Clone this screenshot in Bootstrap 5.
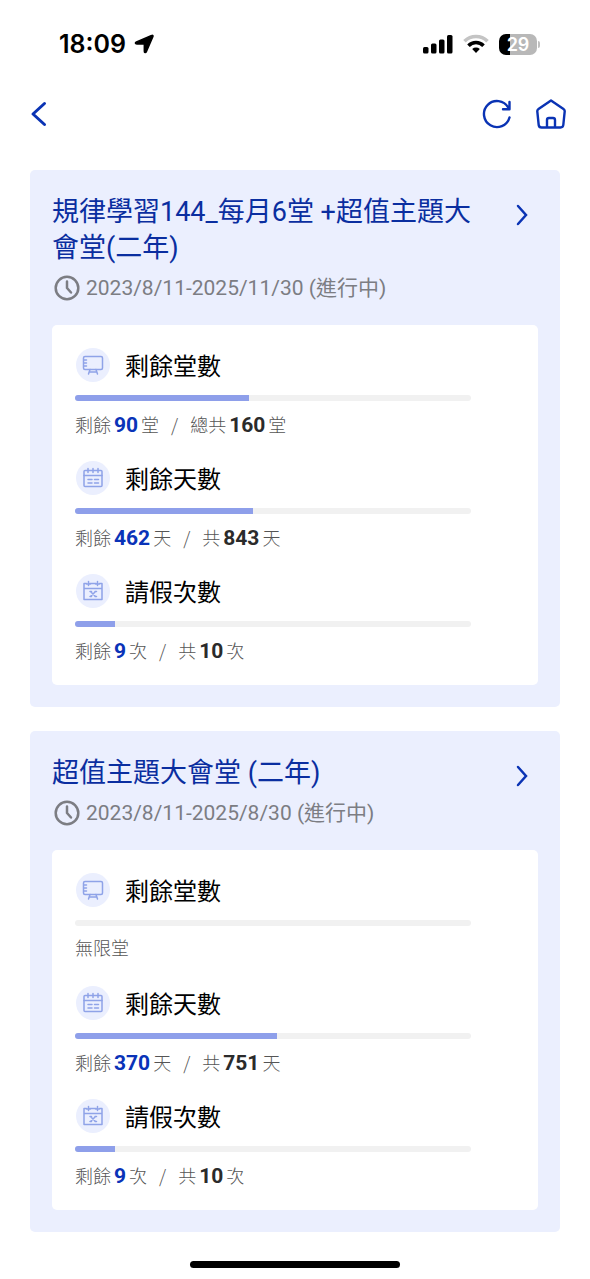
<!DOCTYPE html>
<html lang="zh-Hant">
<head>
<meta charset="utf-8">
<meta name="viewport" content="width=device-width, initial-scale=1">
<title>課程</title>
<link href="https://cdn.jsdelivr.net/npm/bootstrap@5.3.0/dist/css/bootstrap.min.css" rel="stylesheet">
<style>
  body { font-family: Roboto, "Noto Sans CJK TC", sans-serif; background: #fff; color: #000; }
  svg { display: block; flex: none; }
  .status-bar { height: 88px; padding: 0 50px 0 59px; }
  .clock { font: 600 25px/30px Inter, sans-serif; }
  .battery-level { width: 38px; height: 21px; border-radius: 7px; background: linear-gradient(90deg, #000 29%, #b8b8b8 29%); color: #fff; font: 600 18px/21px Inter, sans-serif; }
  .battery-tip { width: 2px; height: 7px; margin-left: 1px; border-radius: 0 2px 2px 0; background: #c0c0c0; }
  .top-nav { height: 52px; padding: 0 24px 0 30px; color: #0a33b4; }
  .course-list { padding: 30px 30px 29px; gap: 24px; }
  .course { background: #ebeffe; border-radius: 5px; padding: 24px 22px 22px; }
  .course-title { font-size: 27px; line-height: 36px; font-weight: 400; color: #0a2ea0; }
  .course-link { padding: 10px 7px 0 36px; }
  .period { margin-top: 7px; margin-bottom: 22px; padding-left: 2px; gap: 6px; font-size: 21px; line-height: 30px; color: #7c7d83; }
  .stats { background: #fff; border-radius: 5px; padding: 22px 23px 20px; gap: 21px; }
  .stat-head { height: 36px; gap: 15px; padding-left: 1px; }
  .stat-icon { width: 34px; height: 34px; background: #ebeffe; color: #8fa3e8; }
  .stat-name { padding-top: 4px; font-size: 24px; line-height: 36px; font-weight: 400; color: #000; }
  .stat-bar { width: 90%; height: 6px; margin: 12px 0 8px; border-radius: 3px; background: #f1f1f1; }
  .stat-bar .progress-bar { background: #8e9fea; }
  .amount { height: 30px; font-size: 18px; line-height: 30px; font-weight: 300; color: #555; }
  .amount b { font-size: 21px; font-weight: 700; color: #2b2b2b; margin: 0 3px; }
  .amount b.left { color: #0a33b8; }
  .slash { margin: 0 12px; font-family: "Noto Sans CJK TC", sans-serif; }
  .home-bar { width: 210px; height: 7px; margin-bottom: 12px; background: #000; }
</style>
</head>
<body>
<svg width="0" height="0" class="position-absolute" aria-hidden="true">
  <defs>
    <g id="i-board" fill="none" stroke="currentColor" stroke-width="1.500" stroke-linejoin="round" stroke-linecap="round">
      <rect x="8.500" y="9.500" width="19" height="13" rx="1.500"/><path d="M9 13h2.500M9 16h2.500M9 19h2.500M15 22.500l-1.500 4.500M21 22.500l1.500 4.500M14.500 25h7"/>
    </g>
    <g id="i-cal" fill="none" stroke="currentColor" stroke-width="1.500" stroke-linejoin="round" stroke-linecap="round">
      <rect x="9" y="10.500" width="18" height="16" rx="1"/><path d="M9 15.500h18M13 8.500v4M18 8.500v4M23 8.500v4M13 19.500h4M19.500 19.500h4M13 23h4M19.500 23h4"/>
    </g>
    <g id="i-leave" fill="none" stroke="currentColor" stroke-width="1.500" stroke-linejoin="round" stroke-linecap="round">
      <path d="M11.500 10.500H9v16h18v-16h-2.500M15 10.500h6M9 15.500h18M13.500 8.500v4M22.500 8.500v4M11.500 11h4M20.500 11h4M15.500 18.500l5 5M20.500 18.500l-5 5M15 18.500h1.500M20 18.500h1.500M15 23.500h1.500M20 23.500h1.500"/>
    </g>
    <g id="i-clock" fill="none" stroke="#7c7d83" stroke-width="2.500" stroke-linecap="round"><circle cx="13" cy="13" r="11.300"/><path d="M13 6.500V13l4 4.500" stroke-linejoin="round"/></g>
    <path id="i-next" d="M2 2l8 9-8 9" fill="none" stroke="#0a33b4" stroke-width="2.500" stroke-linecap="round"/>
  </defs>
</svg>

<header>
  <div class="status-bar d-flex align-items-center justify-content-between">
    <div class="d-flex align-items-center gap-2">
      <span class="clock">18:09</span>
      <svg width="20" height="20" viewBox="0 0 21 21"><path stroke="#000" stroke-width="1.500" stroke-linejoin="round" d="M18.500 1.600C19.700 1 20.300 1.700 19.800 2.900L13 18.500c-.7 1.600-2.200 1.200-2.200-.5v-7.500H3C1.100 10.500.9 9 2.600 8.300z"/></svg>
    </div>
    <div class="d-flex align-items-center">
      <svg width="30" height="20" viewBox="0 0 30 20"><rect y="13" width="5.500" height="6.500" rx="1.500"/><rect x="8" y="9.500" width="5.500" height="10" rx="1.500"/><rect x="16" y="5.500" width="5.500" height="14" rx="1.500"/><rect x="24" y="1" width="5.500" height="18.500" rx="1.500"/></svg>
      <svg class="ms-2 me-2" width="30" height="20" viewBox="0 0 30 20"><g transform="translate(2)" fill="none" stroke-width="3.600"><path d="M1.500 7.200a16.500 16.500 0 0 1 23 0" stroke="#c4c4c4"/><path d="M5.500 11.700a10.500 10.500 0 0 1 15 0" stroke="#000"/><path d="M9.200 15a5.600 5.600 0 0 1 7.600 0L13 19z" fill="#000"/></g></svg>
      <div class="battery-level text-center">29</div><div class="battery-tip"></div>
    </div>
  </div>
  <nav class="top-nav d-flex align-items-center justify-content-between">
    <button type="button" class="btn p-0 border-0" aria-label="返回"><svg width="18" height="26" viewBox="0 0 18 26" fill="none" stroke="#0a33b4" stroke-width="3" stroke-linecap="round" stroke-linejoin="round"><path d="M14.500 2.500L3 13l11.500 10.500"/></svg></button>
    <div class="d-flex align-items-center gap-4">
      <button type="button" class="btn p-0 border-0" aria-label="重新整理"><svg width="30" height="30" viewBox="0 0 30 30" fill="none" stroke="#0a33b4" stroke-width="2.400" stroke-linecap="round" stroke-linejoin="round"><path d="M27.500 18.500A13 13 0 1 1 26.200 8.500M27.500 3v7.300H21"/></svg></button>
      <a href="#" aria-label="首頁"><svg width="30" height="30" viewBox="0 0 30 30" fill="none" stroke="#0a33b4" stroke-width="2.400" stroke-linecap="round" stroke-linejoin="round"><path d="M15 1.500L27.500 10c1 .7 1.300 1.300 1.200 2.400L27.300 26c-.2 1.700-1 2.500-2.800 2.500h-19c-1.800 0-2.600-.8-2.800-2.500L1.300 12.400c-.1-1.100.2-1.700 1.200-2.400zM11 28v-7c0-1.200.7-2 2-2h4c1.300 0 2 .8 2 2v7"/></svg></a>
    </div>
  </nav>
</header>

<main class="course-list d-flex flex-column">
  <article class="course">
    <div class="row g-0">
      <h2 class="course-title col mb-0">規律學習144_每月6堂 +超值主題大會堂(二年)</h2>
      <a href="#" class="course-link col-auto" aria-label="查看課程"><svg width="16" height="22" viewBox="-1 0 16 22"><use href="#i-next"/></svg></a>
    </div>
    <div class="period d-flex align-items-center"><svg width="26" height="26"><use href="#i-clock"/></svg><span>2023/8/11-2025/11/30 (進行中)</span></div>
    <div class="stats d-flex flex-column">
      <section>
        <div class="stat-head d-flex align-items-center"><span class="stat-icon rounded-circle"><svg width="34" height="34" viewBox="1 1 34 34"><use href="#i-board"/></svg></span><h3 class="stat-name mb-0">剩餘堂數</h3></div>
        <div class="progress stat-bar" role="progressbar" aria-label="剩餘堂數" aria-valuenow="44" aria-valuemin="0" aria-valuemax="100"><div class="progress-bar" style="width:44%"></div></div>
        <div class="amount d-flex align-items-baseline">剩餘<b class="left">90</b>堂<span class="slash">/</span>總共<b>160</b>堂</div>
      </section>
      <section>
        <div class="stat-head d-flex align-items-center"><span class="stat-icon rounded-circle"><svg width="34" height="34" viewBox="1 1 34 34"><use href="#i-cal"/></svg></span><h3 class="stat-name mb-0">剩餘天數</h3></div>
        <div class="progress stat-bar" role="progressbar" aria-label="剩餘天數" aria-valuenow="45" aria-valuemin="0" aria-valuemax="100"><div class="progress-bar" style="width:45%"></div></div>
        <div class="amount d-flex align-items-baseline">剩餘<b class="left">462</b>天<span class="slash">/</span>共<b>843</b>天</div>
      </section>
      <section>
        <div class="stat-head d-flex align-items-center"><span class="stat-icon rounded-circle"><svg width="34" height="34" viewBox="1 1 34 34"><use href="#i-leave"/></svg></span><h3 class="stat-name mb-0">請假次數</h3></div>
        <div class="progress stat-bar" role="progressbar" aria-label="請假次數" aria-valuenow="10" aria-valuemin="0" aria-valuemax="100"><div class="progress-bar" style="width:10%"></div></div>
        <div class="amount d-flex align-items-baseline">剩餘<b class="left">9</b>次<span class="slash">/</span>共<b>10</b>次</div>
      </section>
    </div>
  </article>

  <article class="course">
    <div class="row g-0">
      <h2 class="course-title col mb-0">超值主題大會堂 (二年)</h2>
      <a href="#" class="course-link col-auto" aria-label="查看課程"><svg width="16" height="22" viewBox="-1 0 16 22"><use href="#i-next"/></svg></a>
    </div>
    <div class="period d-flex align-items-center"><svg width="26" height="26"><use href="#i-clock"/></svg><span>2023/8/11-2025/8/30 (進行中)</span></div>
    <div class="stats d-flex flex-column">
      <section>
        <div class="stat-head d-flex align-items-center"><span class="stat-icon rounded-circle"><svg width="34" height="34" viewBox="1 1 34 34"><use href="#i-board"/></svg></span><h3 class="stat-name mb-0">剩餘堂數</h3></div>
        <div class="progress stat-bar" role="progressbar" aria-label="剩餘堂數" aria-valuenow="0" aria-valuemin="0" aria-valuemax="100"><div class="progress-bar" style="width:0%"></div></div>
        <div class="amount">無限堂</div>
      </section>
      <section>
        <div class="stat-head d-flex align-items-center"><span class="stat-icon rounded-circle"><svg width="34" height="34" viewBox="1 1 34 34"><use href="#i-cal"/></svg></span><h3 class="stat-name mb-0">剩餘天數</h3></div>
        <div class="progress stat-bar" role="progressbar" aria-label="剩餘天數" aria-valuenow="51" aria-valuemin="0" aria-valuemax="100"><div class="progress-bar" style="width:51%"></div></div>
        <div class="amount d-flex align-items-baseline">剩餘<b class="left">370</b>天<span class="slash">/</span>共<b>751</b>天</div>
      </section>
      <section>
        <div class="stat-head d-flex align-items-center"><span class="stat-icon rounded-circle"><svg width="34" height="34" viewBox="1 1 34 34"><use href="#i-leave"/></svg></span><h3 class="stat-name mb-0">請假次數</h3></div>
        <div class="progress stat-bar" role="progressbar" aria-label="請假次數" aria-valuenow="10" aria-valuemin="0" aria-valuemax="100"><div class="progress-bar" style="width:10%"></div></div>
        <div class="amount d-flex align-items-baseline">剩餘<b class="left">9</b>次<span class="slash">/</span>共<b>10</b>次</div>
      </section>
    </div>
  </article>
</main>
<footer class="d-flex justify-content-center"><div class="home-bar rounded-pill"></div></footer>
<script src="https://cdn.jsdelivr.net/npm/bootstrap@5.3.0/dist/js/bootstrap.bundle.min.js"></script>
</body>
</html>
